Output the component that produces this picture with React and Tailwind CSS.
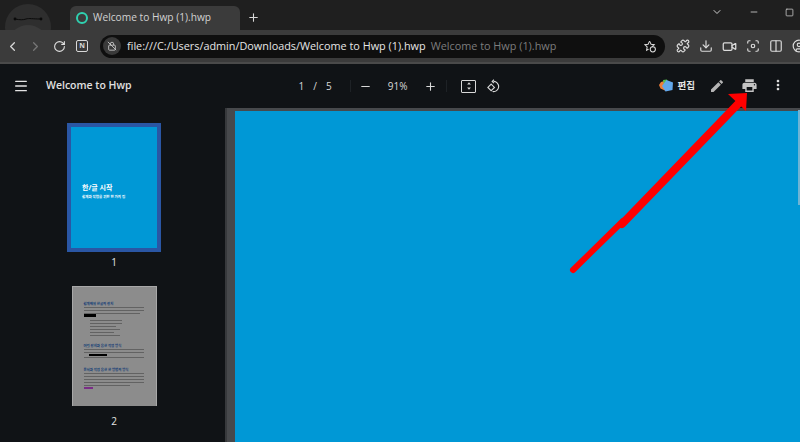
import React from "react";
import {
  ChevronLeft,
  ChevronRight,
  ChevronDown,
  RotateCw,
  Menu,
  Minus,
  Plus,
  Square,
  Puzzle,
  Download,
  Video,
  Focus,
  Columns2,
  CircleUser,
} from "lucide-react";
import { MdEdit, MdPrint, MdMoreVert } from "react-icons/md";

const FONT = "font-['Open_Sans','Noto_Sans_CJK_KR',sans-serif]";

const TextLines = ({ widths }) => (
  <div className="flex flex-col gap-[2px]">
    {widths.map((w, i) => (
      <div
        key={i}
        className="h-[1px] bg-[#626262]"
        style={{ width: `${w}px` }}
      />
    ))}
  </div>
);

const Heading = ({ children }) => (
  <div className="text-[3.4px] leading-[5px] font-bold text-[#0f3a75] whitespace-nowrap">
    {children}
  </div>
);

const Thumbnails = () => (
  <aside className="w-[225px] shrink-0 bg-[#101316] flex flex-col items-center pt-[15px] pl-[3px]">
    <div className="w-[94px] h-[129px] border-[4.5px] border-[#2a56a4] bg-[#0098d6] pl-[11px] pt-[56px]">
      <div className="text-[7px] leading-[9px] font-bold text-white whitespace-nowrap">
        한/글 시작
      </div>
      <div className="mt-[2px] text-[3.5px] leading-[5px] font-bold text-white whitespace-nowrap">
        쉽게와 작업을 위한 한 가지 팁
      </div>
    </div>
    <div className="text-[10px] leading-[14px] text-[#e4e4e4] mt-[3px]">1</div>
    <div className="w-[85px] h-[120px] bg-[#8c8c8c] border-x border-t border-[#a8a8a8] mt-[17px] pl-[11px] pt-[14px] flex flex-col">
      <Heading>쉽게배워 한글의 장치</Heading>
      <div className="mt-[1px]">
        <TextLines widths={[60, 60, 56]} />
      </div>
      <div className="h-[3px] w-[12px] bg-black" />
      <div className="mt-[3px] ml-[6px]">
        <TextLines widths={[32, 32, 26, 30, 24, 30]} />
      </div>
      <div className="mt-[7px]">
        <Heading>여럿 장치와 옵션 작업 방식</Heading>
      </div>
      <div className="mt-[1px]">
        <TextLines widths={[60, 60]} />
      </div>
      <div className="h-[2px] w-[18px] ml-[5px] bg-black mt-[1px]" />
      <div className="mt-[1px]">
        <TextLines widths={[60]} />
      </div>
      <div className="mt-[9px]">
        <Heading>문서와 작업 옵션 한 방법의 방식</Heading>
      </div>
      <div className="mt-[1px]">
        <TextLines widths={[60, 60, 60, 60, 46]} />
      </div>
      <div className="h-[2px] w-[9px] bg-[#7a2d86] mt-[1px]" />
    </div>
    <div className="text-[10px] leading-[14px] text-[#e4e4e4] mt-[8px]">2</div>
  </aside>
);

const App = () => {
  return (
    <div className={`relative w-[800px] h-[442px] overflow-hidden bg-[#101316] flex flex-col ${FONT}`}>
      {/* tab strip */}
      <div className="h-[30px] shrink-0 bg-[#1f1f1f] flex items-start">
        <div className="w-[70px] shrink-0 h-[30px] overflow-hidden">
          <svg viewBox="0 0 70 30" className="w-[70px] h-[30px]">
            <circle cx="28" cy="27" r="23" fill="#2e2e2e" />
            <ellipse cx="28" cy="40" rx="18" ry="15" fill="#3a3a3a" />
            <path d="M15 19c5 1 8 1 11 0s7 0 14 0" stroke="#0a0a0a" strokeWidth="1" fill="none" />
            <circle cx="15" cy="19" r="1.4" fill="#0a0a0a" />
            <circle cx="41" cy="19" r="1.4" fill="#0a0a0a" />
          </svg>
        </div>
        <div className="mt-[6px] w-[170px] h-[24px] bg-[#3b3b3b] rounded-t-[6px] flex items-center pl-[6px] gap-[5px]">
          <div className="w-[12px] h-[12px] rounded-full border-2 border-[#2fd1b0]" />
          <span className="text-[10.2px] text-[#d2d2d2] whitespace-nowrap">Welcome to Hwp (1).hwp</span>
        </div>
        <Plus size={13} className="text-[#d8d8d8] mt-[11px] ml-[7px]" strokeWidth={2} />
        <div className="ml-auto flex items-center gap-[26px] pt-[6px] pr-[6px] text-[#cfcfcf]">
          <ChevronDown size={12} />
          <Minus size={10} />
          <Square size={9} />
        </div>
      </div>

      {/* browser toolbar */}
      <div className="h-[34px] shrink-0 bg-[#3b3b3b] flex items-center overflow-hidden border-b-2 border-[#4a4a4a] shadow-[0_1px_0_#000]">
        <ChevronLeft size={15} className="shrink-0 ml-[5px] text-[#d8d8d8]" />
        <ChevronRight size={15} className="shrink-0 ml-[8px] text-[#777777]" />
        <RotateCw size={13} className="shrink-0 ml-[10px] text-[#e0e0e0]" />
        <div className="shrink-0 ml-[10px] w-[12px] h-[12px] border-[1.5px] border-[#d8d8d8] rounded-[2px] text-[7px] leading-[9px] font-bold text-[#d8d8d8] text-center">
          N
        </div>
        <div className="shrink-0 ml-[12px] w-[565px] h-[23px] bg-[#0f0f0f] rounded-full flex items-center">
          <div className="ml-[3px] w-[18px] h-[18px] rounded-full bg-[#3a3a3a] flex items-center justify-center">
            <svg viewBox="0 0 12 12" className="w-[10px] h-[10px]" fill="none" stroke="#cfcfcf" strokeWidth="1">
              <rect x="2" y="5" width="8" height="6" rx="1" />
              <path d="M4 5V3.5a2 2 0 0 1 4 0V5" />
              <path d="M1 1l10 10" />
            </svg>
          </div>
          <span className="ml-[6px] text-[10.85px] text-[#e6e6e6] whitespace-nowrap">
            file:///C:/Users/admin/Downloads/Welcome to Hwp (1).hwp
          </span>
          <span className="ml-[5px] text-[10.85px] text-[#7d7d7d] whitespace-nowrap">
            Welcome to Hwp (1).hwp
          </span>
          <svg viewBox="0 0 14 14" className="ml-auto mr-[8px] w-[13px] h-[13px]" fill="none" stroke="#dcdcdc" strokeWidth="1.1">
            <path d="M6 1.2 7.6 4.6 11 5 8.6 7.4" />
            <path d="M6 1.2 4.4 4.6 1 5l2.4 2.4L2.8 11 5 9.8" />
            <circle cx="9.5" cy="10" r="2.8" />
          </svg>
        </div>
        <div className="shrink-0 ml-[11px] flex items-center gap-[9px] text-[#dcdcdc]">
          <Puzzle size={14} />
          <Download size={14} />
          <Video size={15} />
          <Focus size={14} />
          <Columns2 size={14} />
          <CircleUser size={14} />
        </div>
      </div>

      {/* pdf toolbar */}
      <div className="h-[44px] shrink-0 bg-[#101316] flex items-center relative">
        <Menu size={16} className="ml-[13px] text-[#e4e4e4]" />
        <span className="ml-[17px] text-[10.5px] font-semibold text-[#e0e0e0] whitespace-nowrap">Welcome to Hwp</span>
        <div className="ml-[167px] flex items-center text-[10px] text-[#d8d8d8]">
          <span>1</span>
          <span className="ml-[9px]">/</span>
          <span className="ml-[9px]">5</span>
          <div className="ml-[18px] w-[1px] h-[12px] bg-[#1e2226]" />
          <Minus size={13} className="ml-[8px]" />
          <span className="ml-[16px]">91%</span>
          <Plus size={13} className="ml-[17px]" />
          <div className="ml-[9px] w-[1px] h-[12px] bg-[#1e2226]" />
          <div className="ml-[14px] w-[15px] h-[13px] border border-[#d8d8d8] rounded-[1px] flex items-center justify-center">
            <svg viewBox="0 0 8 10" className="w-[6px] h-[8px]" fill="#d8d8d8">
              <path d="M4 0 6.5 3h-5zM4 10 1.5 7h5z" />
            </svg>
          </div>
          <svg viewBox="0 0 16 16" className="ml-[10px] w-[15px] h-[15px]" fill="none" stroke="#d8d8d8" strokeWidth="1.2">
            <path d="M8 2.5a5.5 5.5 0 1 1-1 10.9" />
            <path d="M8.5 0.8 6.6 2.6l1.9 1.8" />
            <path d="M5.5 5.5 9 9l-3.5 3.5L2 9z" />
          </svg>
        </div>
        <svg viewBox="0 0 16 16" className="ml-[157px] w-[16px] h-[16px]">
          <path d="M3 4 8 2.5 8 13 2.5 10.5 1 7z" fill="#ee7f3a" />
          <path d="M5 2 9 1.5 10 5 6 7z" fill="#58c04d" />
          <path d="M8.5 2 15 4.5 14.5 12 7.5 13.5 4 8z" fill="#62a8ec" />
        </svg>
        <span className="ml-[3px] text-[9.5px] font-bold text-[#e4e4e4] whitespace-nowrap">편집</span>
        <MdEdit size={16} className="ml-[14px] text-[#b5b5b5]" />
        <MdPrint size={17} className="ml-[16px] -mt-[2px] text-[#c4c4c4]" />
        <MdMoreVert size={16} className="ml-[12px] -mt-[2px] text-[#e0e0e0]" />
      </div>

      {/* body */}
      <div className="flex-1 flex min-h-0">
        <Thumbnails />
        <div className="w-[10px] shrink-0 bg-[#47494c] border-l-2 border-[#37393c]" />
        <div className="flex-1 bg-[#0098d6] border-t-[3px] border-[#47494c]" />
      </div>

      {/* page scrollbar */}
      <div className="absolute right-0 top-[110px] w-[2px] h-[95px] bg-[#6fb4d4]" />

      {/* annotation arrow */}
      <svg className="absolute inset-0 w-[800px] h-[442px] pointer-events-none" viewBox="0 0 800 442" fill="none">
        <path d="M573 270 623 221" stroke="#ff0000" strokeWidth="6" strokeLinecap="round" />
        <path d="M622 224 738 104" stroke="#ff0000" strokeWidth="8" strokeLinecap="round" />
        <path d="M728 94 747 93 746 111z" fill="#ff0000" />
      </svg>
    </div>
  );
};

export default App;
